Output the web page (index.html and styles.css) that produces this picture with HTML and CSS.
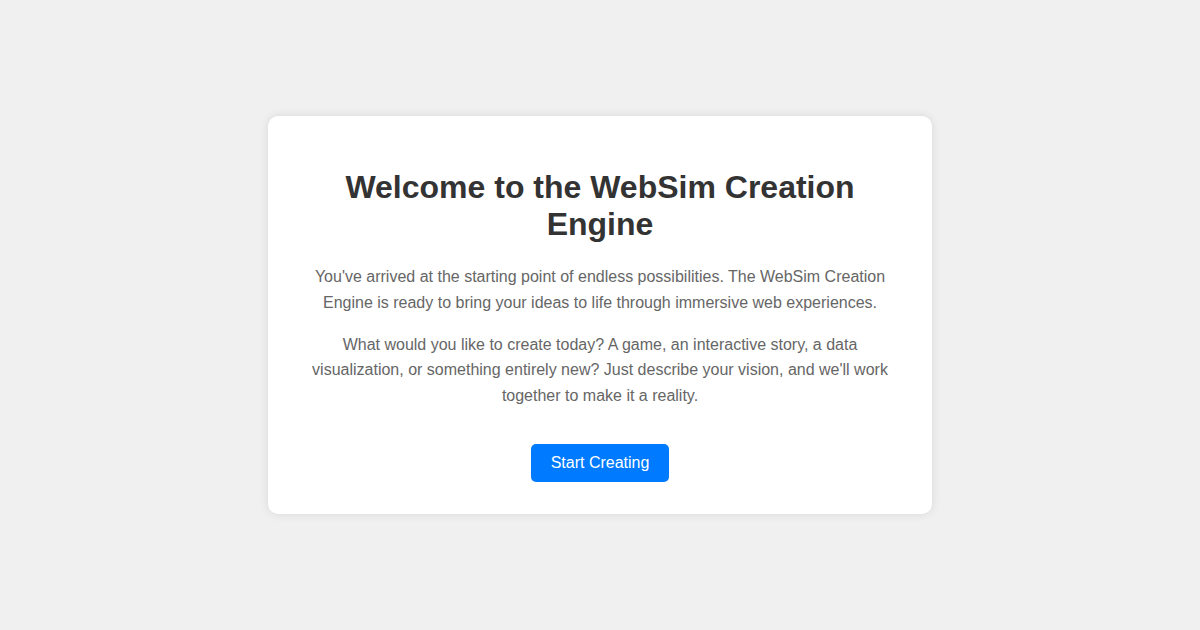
FILE: index.html
```html
<!DOCTYPE html>
<html lang="en">
<head>
    <meta charset="UTF-8">
    <meta name="viewport" content="width=device-width, initial-scale=1.0">
    <title>WebSim Creation Engine</title>
    <link rel="stylesheet" href="styles.css">
</head>
<body>

    <div class="container">
        <h1>Welcome to the WebSim Creation Engine</h1>
        <p>You've arrived at the starting point of endless possibilities. The WebSim Creation Engine is ready to bring your ideas to life through immersive web experiences.</p>
        <p>What would you like to create today? A game, an interactive story, a data visualization, or something entirely new? Just describe your vision, and we'll work together to make it a reality.</p>
        <button class="start-btn">Start Creating</button>
    </div>

</body>
</html>
```

FILE: styles.css
```css
html, body {
    height: 100%;
}
body {
    font-family: "Liberation Sans", Arial, sans-serif;
    background-color: #f0f0f0;
    margin: 0;
    display: flex;
    justify-content: center;
    align-items: center;
}
.container {
    background: white;
    padding: 32px;
    border-radius: 10px;
    box-shadow: 0 0 10px rgba(0, 0, 0, 0.1);
    max-width: 600px;
    text-align: center;
}
h1 {
    color: #333;
    font-size: 32px;
    margin: 21.44px 0;
}
p {
    color: #666;
    font-size: 16px;
    line-height: 1.6;
    margin: 16px 0;
}
.start-btn {
    display: block;
    margin: 36px auto 0;
    background-color: #007bff;
    color: white;
    border: none;
    padding: 10px 20px;
    font-family: inherit;
    font-size: 16px;
    border-radius: 5px;
    cursor: pointer;
}
.start-btn:hover {
    background-color: #0056b3;
}
```
